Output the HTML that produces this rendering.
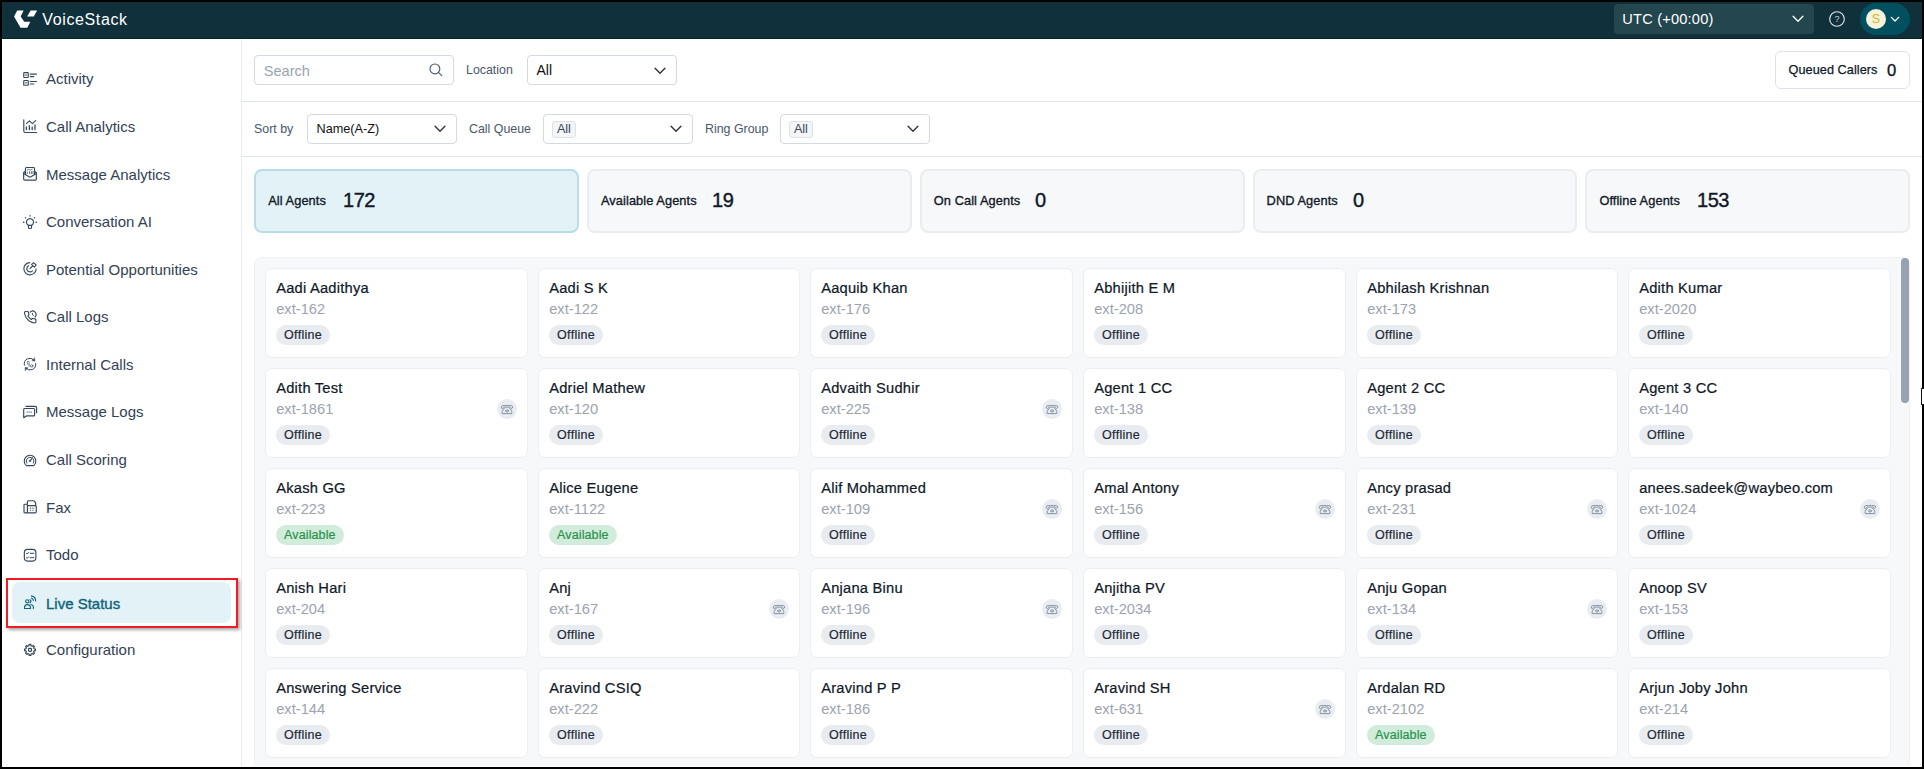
<!DOCTYPE html>
<html><head><meta charset="utf-8"><title>VoiceStack</title>
<style>
*{box-sizing:border-box;margin:0;padding:0}
html,body{width:1924px;height:769px;overflow:hidden;background:#000;font-family:"Liberation Sans",sans-serif}
#frame{position:absolute;left:2px;top:2px;width:1920px;height:765px;background:#fff;overflow:hidden}
#hdr{position:absolute;left:0;top:0;width:1920px;height:37px;background:#10303c;border-bottom:1px solid #06222c}
#hdr .logo{position:absolute;left:10px;top:8px}
#hdr .brand{position:absolute;left:40.3px;top:8px;font-size:16px;line-height:20px;color:#fff;letter-spacing:0.62px}
#hdr .tz{position:absolute;left:1612px;top:1.7px;width:200px;height:30px;border-radius:4px;background:#24464f;color:#fff;font-size:14.6px;line-height:30px;padding-left:8.3px;letter-spacing:.2px}
#hdr .tz .chev{position:absolute;right:10px;top:11.5px}
#hdr .help{position:absolute;left:1826px;top:8px}
#hdr .user{position:absolute;left:1858px;top:1px;width:50px;height:32px;border-radius:16px;background:#00505f}
#hdr .user .av{position:absolute;left:6px;top:6px;width:20px;height:20px;border-radius:50%;background:#f5f3dc;color:#d1b621;font-size:12.5px;line-height:20px;text-align:center}
#hdr .user .uchev{position:absolute;left:30px;top:13px}

#side{position:absolute;left:0;top:36.7px;width:240px;height:729px;border-right:1px solid #eaebee;background:#fff}
.nav{position:absolute;left:10px;width:219px;height:41.2px;border-radius:8px;color:#334155;font-size:15px;line-height:41.2px;margin-top:-36.7px}
.nav .ni{position:absolute;left:10px;top:12.6px}
.nav span{position:absolute;left:34px;top:0;white-space:nowrap}
.nav.act{background:#e3f2f7;color:#0f6377}
.nav.act span{top:1px;-webkit-text-stroke:.35px #0f6377}
.redbox{position:absolute;left:4.3px;top:539.7px;width:232px;height:49.5px;border:2px solid #ee1c25;box-shadow:2px 2px 3px rgba(0,0,0,.35)}

#main{position:absolute;left:240px;top:36.7px;width:1680px;height:729px}
.row1{position:absolute;left:0;top:0;width:1680px;height:63px;border-bottom:1px solid #dfe5ee}
.row2{position:absolute;left:0;top:63px;width:1680px;height:55.3px;border-bottom:1px solid #dfe5ee}
.inp{position:absolute;height:30px;border:1px solid #d3dae6;border-radius:4px;background:#fff}
.search{left:12.2px;top:16.4px;width:200px}
.search span{position:absolute;left:8.5px;top:1px;line-height:28.6px;font-size:14.6px;color:#9aa3b1}
.search .sic{position:absolute;left:173px;top:6px}
.sel{width:150px}
.sel .chev{position:absolute;right:10px;top:10.7px}
.sel .v{position:absolute;left:8.5px;top:1px;line-height:27.6px;font-size:14px;color:#111}
.sel .v.s{font-size:12.7px}
.sel .chip{position:absolute;left:7.6px;top:6.2px;height:17px;padding:0 4.3px;border:1px solid #dde2ea;border-radius:3px;background:#f3f5f9;font-size:12.6px;line-height:15.4px;color:#3b4656}
.lbl{position:absolute;font-size:12.4px;line-height:16px;color:#4b5666;white-space:nowrap}
.queued{position:absolute;left:1533px;top:12px;width:135px;height:38px;border:1px solid #dde2ee;border-radius:6px}
.queued .ql{position:absolute;left:12.6px;top:10.5px;font-size:12.7px;line-height:16px;color:#111827;white-space:nowrap;-webkit-text-stroke:.25px #111827;letter-spacing:.05px}
.queued .qn{position:absolute;left:111px;top:9px;font-size:16.6px;line-height:20px;color:#111827;-webkit-text-stroke:.35px #111827}
.stats{position:absolute;left:12.2px;top:130.2px;width:1656px;height:64px}
.stat{position:absolute;top:0;width:324.8px;height:64px;border:2px solid #e9ecf0;border-radius:8px;background:#f7f8fa}
.stat.on{background:#e3f2f7;border:2px solid #b9dde6}
.stat .sl{position:absolute;left:12.5px;top:23px;font-size:12.8px;line-height:16px;color:#111827;white-space:nowrap;-webkit-text-stroke:.33px #111827;letter-spacing:.08px}
.stat.on .sl{left:12px;top:22.5px}
.stat .sl{left:12px;top:22.5px}
.stat .sn{position:absolute;top:17.5px;font-size:20px;line-height:26px;color:#111827;white-space:nowrap;-webkit-text-stroke:.4px #111827;letter-spacing:-.45px}
.stat .sn{top:16.5px}
.panel{position:absolute;left:12.2px;top:218.6px;width:1655.6px;height:520px;background:#f7f8fa;border:1px solid #eef0f3;border-radius:8px 8px 0 0}
.card{position:absolute;height:90px;background:#fff;border:1px solid #eceef2;border-radius:7px}
.card .nm{position:absolute;left:10px;top:8.6px;font-size:14.7px;line-height:20px;color:#111827;white-space:nowrap;-webkit-text-stroke:.22px #111827;letter-spacing:.22px}
.card .ex{position:absolute;left:10px;top:29.5px;font-size:14.7px;line-height:20px;color:#9ca3af;white-space:nowrap}
.card .bd{position:absolute;left:10px;top:56px;height:20px;border-radius:10px;padding:0 7.9px;font-size:12.5px;line-height:21px;white-space:nowrap;letter-spacing:.3px;-webkit-text-stroke:.2px}
.bd.of{background:#e8ecf0;color:#1f2937}
.bd.av{background:#d1ecda;color:#27924d;letter-spacing:.12px}
.card .ph{position:absolute;right:10px;top:30px;width:20px;height:20px;border-radius:50%;background:#e9edf2}
.card .ph svg{position:absolute;left:3px;top:4.3px}
.thumb{position:absolute;left:1646px;top:0px;width:8px;height:145px;border-radius:4px;background:#96a3b0}
.cur{position:absolute;left:1921px;top:388px;width:4px;height:17px;background:#fff;border:1px solid #111;border-right:none;border-radius:1px 0 0 1px}

#frame::after{content:'';position:absolute;left:0;bottom:0;width:1920px;height:1px;background:#fff;z-index:5}

</style></head><body>
<div id="frame">
<div id="hdr"><svg class="logo" viewBox="0 0 26 20" width="26" height="20"><path fill="#fff" d="M5.2 0.4H11.6L8.7 6.5L12.2 11.8H18.3L15.3 17.8H8.5L2.05 6.5Z"/><path fill="#fff" d="M18.7 0.4H25.1L21.8 6.5H15.1Z"/></svg><span class="brand">VoiceStack</span><div class="tz"><span>UTC (+00:00)</span><svg class="chev" viewBox="0 0 12 8" width="12" height="8" fill="none" stroke="#fff" stroke-width="1.3" stroke-linecap="round" stroke-linejoin="round"><path d="M1.1 1.3L6 6.2L10.9 1.3"/></svg></div><svg class="help" viewBox="0 0 18 18" width="18" height="18" fill="none" stroke="#e5eaec" stroke-width="1.1"><circle cx="9" cy="9" r="7.3"/><text x="9" y="12.3" text-anchor="middle" font-family="Liberation Sans, sans-serif" font-size="9" fill="#c9d3d7" stroke="none">?</text></svg><div class="user"><span class="av">S</span><svg class="uchev" viewBox="0 0 10 7" width="10" height="7" fill="none" stroke="#fff" stroke-width="1.2" stroke-linecap="round" stroke-linejoin="round"><path d="M1.2 1.3L5 5L8.8 1.3"/></svg></div></div>
<div id="side">
<div class="nav" style="top:56.40px"><svg class="ni" viewBox="0 0 16 16" width="16" height="16" fill="none" stroke="#36475a" stroke-width="1.15" stroke-linecap="round" stroke-linejoin="round" ><rect x="1.75" y="1.65" width="4.5" height="4.8" rx="0.6"/><rect x="1.75" y="9.45" width="4.5" height="4.8" rx="0.6"/><path d="M3.3 4.05H4.7M3.3 11.85H4.7" stroke-width="0.9"/><path d="M8.3 3.1H14.5M8.3 5.6H11.8M8.3 10.5H14.5M8.3 13H11.8"/></svg><span>Activity</span></div>
<div class="nav" style="top:103.98px"><svg class="ni" viewBox="0 0 16 16" width="16" height="16" fill="none" stroke="#36475a" stroke-width="1.15" stroke-linecap="round" stroke-linejoin="round" ><path d="M1.8 0.9V12Q1.8 13.5 3.3 13.5H14.6"/><path d="M4.4 7.9V10.5M7.4 6.7V10.5M10.2 8.1V10.5M13 6V10.5" stroke-width="1.3"/><path d="M4.4 4.7L7.4 1.9L10.4 4.7L13.7 1.6" stroke-width="1.05"/></svg><span>Call Analytics</span></div>
<div class="nav" style="top:151.56px"><svg class="ni" viewBox="0 0 16 16" width="16" height="16" fill="none" stroke="#36475a" stroke-width="1.15" stroke-linecap="round" stroke-linejoin="round" ><path d="M1.65 6.7V13Q1.65 14.15 2.8 14.15H13.2Q14.35 14.15 14.35 13V6.7"/><path d="M1.65 7.5L7 10.8Q8 11.4 9 10.8L14.35 7.5"/><path d="M3.45 8.4V2.4Q3.45 1.45 4.4 1.45H11.6Q12.55 1.45 12.55 2.4V8.4"/><path d="M1.65 6.7L3.45 5.3M14.35 6.7L12.55 5.3"/><path d="M5.3 6.1V7.4M7.6 5.7V7.6M9.4 5.7V7.6M11 5.2V7.6" stroke-width="0.8"/><path d="M5.2 4.1L6.7 3.3L8.4 4.1L10.2 3.2" stroke-width="0.7"/></svg><span>Message Analytics</span></div>
<div class="nav" style="top:199.14px"><svg class="ni" viewBox="0 0 16 16" width="16" height="16" fill="none" stroke="#36475a" stroke-width="1.15" stroke-linecap="round" stroke-linejoin="round" ><path d="M6.45 11.3A3.55 3.55 0 1 1 9.55 11.3"/><path d="M6.45 11.3V13.5Q6.45 14.5 7.45 14.5H8.55Q9.55 14.5 9.55 13.5V11.3Z"/><path d="M8 1.7V2.1M1.5 8.25H1.9M14.1 8.25H14.5M3.5 3.75L3.55 3.8M12.5 3.75L12.45 3.8" stroke-width="1.3"/></svg><span>Conversation AI</span></div>
<div class="nav" style="top:246.72px"><svg class="ni" viewBox="0 0 16 16" width="16" height="16" fill="none" stroke="#36475a" stroke-width="1.15" stroke-linecap="round" stroke-linejoin="round" ><path d="M7.7 1.56A6.15 6.15 0 1 0 14.14 8.0"/><path d="M6.6 4.7A3.3 3.3 0 1 0 10.5 9.9"/><path d="M8.1 7.5L10.8 4.8"/><path d="M11.5 1.6L14.2 4L12.3 6.1L9.5 3.45Z" stroke-width="1.05"/></svg><span>Potential Opportunities</span></div>
<div class="nav" style="top:294.30px"><svg class="ni" viewBox="0 0 16 16" width="16" height="16" fill="none" stroke="#36475a" stroke-width="1.15" stroke-linecap="round" stroke-linejoin="round" ><path transform="translate(1.25 1.35) scale(0.575)" stroke-width="1.95" d="M22 16.92v3a2 2 0 0 1-2.18 2 19.79 19.79 0 0 1-8.63-3.07 19.5 19.5 0 0 1-6-6 19.79 19.79 0 0 1-3.07-8.67A2 2 0 0 1 4.11 2h3a2 2 0 0 1 2 1.72 12.84 12.84 0 0 0 .7 2.81 2 2 0 0 1-.45 2.11L8.09 9.91a16 16 0 0 0 6 6l1.27-1.27a2 2 0 0 1 2.11-.45 12.84 12.84 0 0 0 2.81.7A2 2 0 0 1 22 16.92z"/><path d="M8.1 3.2A3.5 3.5 0 1 1 13.2 8.0"/><path d="M10.4 4.3V5.8L11.5 6.6" stroke-width="1.0"/></svg><span>Call Logs</span></div>
<div class="nav" style="top:341.88px"><svg class="ni" viewBox="0 0 16 16" width="16" height="16" fill="none" stroke="#36475a" stroke-width="1.15" stroke-linecap="round" stroke-linejoin="round" ><g transform="translate(0 0.75)"><path d="M2.4 8.4A5.6 5.6 0 0 1 12.2 3.6" stroke-width="1.0"/><path d="M12.6 1.3L12.9 4.3L10.3 4.1Z" fill="#36475a" stroke-width="0.5"/><path d="M13.65 6.6A5.6 5.6 0 0 1 3.9 11.3" stroke-width="1.0"/><path d="M3.2 13.6L3.1 10.8L5.7 11.0Z" fill="#36475a" stroke-width="0.5"/><path transform="translate(4.6 4.1) scale(0.285)" stroke-width="2.5" d="M22 16.92v3a2 2 0 0 1-2.18 2 19.79 19.79 0 0 1-8.63-3.07 19.5 19.5 0 0 1-6-6 19.79 19.79 0 0 1-3.07-8.67A2 2 0 0 1 4.11 2h3a2 2 0 0 1 2 1.72 12.84 12.84 0 0 0 .7 2.81 2 2 0 0 1-.45 2.11L8.09 9.91a16 16 0 0 0 6 6l1.27-1.27a2 2 0 0 1 2.11-.45 12.84 12.84 0 0 0 2.81.7A2 2 0 0 1 22 16.92z"/></g></svg><span>Internal Calls</span></div>
<div class="nav" style="top:389.46px"><svg class="ni" viewBox="0 0 16 16" width="16" height="16" fill="none" stroke="#36475a" stroke-width="1.15" stroke-linecap="round" stroke-linejoin="round" ><path d="M2.6 4.45H11.6Q12.6 4.45 12.6 5.45V10.9Q12.6 11.9 11.6 11.9H4.4L1.7 13.7V5.45Q1.7 4.45 2.7 4.45Z"/><path d="M3.9 2.35H12.9Q14.6 2.35 14.6 4.05V8.7"/><path d="M5 8.1H5.4M7 8.1H7.4M9 8.1H9.4" stroke-width="1.0"/></svg><span>Message Logs</span></div>
<div class="nav" style="top:437.04px"><svg class="ni" viewBox="0 0 16 16" width="16" height="16" fill="none" stroke="#36475a" stroke-width="1.15" stroke-linecap="round" stroke-linejoin="round" ><path d="M4.4 13.6H11.7A5.8 5.8 0 1 0 4.4 13.6Z"/><path d="M4.8 11.1A3.85 3.85 0 0 1 9.3 5.45M11.2 6.9A3.85 3.85 0 0 1 11.4 11.1" stroke-width="0.95"/><path d="M8 8.9L10.5 5.8" stroke-width="1.1"/><circle cx="7.95" cy="8.95" r="0.75" fill="#36475a" stroke-width="0.5"/></svg><span>Call Scoring</span></div>
<div class="nav" style="top:484.62px"><svg class="ni" viewBox="0 0 16 16" width="16" height="16" fill="none" stroke="#36475a" stroke-width="1.15" stroke-linecap="round" stroke-linejoin="round" ><rect x="2.0" y="5.2" width="3.4" height="8.7" rx="0.9"/><path d="M5.4 6.55H13.2Q14.25 6.55 14.25 7.6V12.85Q14.25 13.9 13.2 13.9H5.4"/><path d="M5.4 5.2V2.7Q5.4 1.75 6.35 1.75H11.6L13.65 3.6V6.55"/><path d="M8.4 9.2H8.6M10.9 9.2H11.1M8.4 11.25H8.6M10.9 11.25H11.1" stroke-width="1.2"/></svg><span>Fax</span></div>
<div class="nav" style="top:532.20px"><svg class="ni" viewBox="0 0 16 16" width="16" height="16" fill="none" stroke="#36475a" stroke-width="1.15" stroke-linecap="round" stroke-linejoin="round" ><rect x="2.35" y="2.35" width="11.5" height="11.7" rx="3.2"/><path d="M4.4 6.3L5.2 7L6.6 5.5M8.2 6.3H11.8M4.4 10.7L5.2 11.4L6.6 9.9M8.2 10.7H11.8" stroke-width="1.0"/></svg><span>Todo</span></div>
<div class="nav act" style="top:579.78px"><svg class="ni" viewBox="0 0 16 16" width="16" height="16" fill="none" stroke="#0f6377" stroke-width="1.1" stroke-linecap="round" stroke-linejoin="round" ><g transform="translate(0 0.75)"><circle cx="5.25" cy="6.6" r="1.65"/><path d="M2.45 13.7V12.9A3 3 0 0 1 8.45 12.9V13.7Z"/><path d="M8.0 5.1A1.65 1.65 0 0 1 8.0 8.1"/><path d="M8.9 9.8A3.4 3.4 0 0 1 11.3 13.9"/><path d="M9.3 1.1A5.2 5.2 0 0 1 13.7 6.2"/><path d="M9.6 3.4A2.9 2.9 0 0 1 11.5 5.8"/></g></svg><span>Live Status</span></div>
<div class="nav" style="top:627.36px"><svg class="ni" viewBox="0 0 16 16" width="16" height="16" fill="none" stroke="#36475a" stroke-width="1.2" stroke-linecap="round" stroke-linejoin="round" ><path d="M6.98 3.82L7.14 2.47L8.86 2.47L9.02 3.82L10.16 4.30L11.23 3.45L12.45 4.67L11.60 5.74L12.08 6.88L13.43 7.04L13.43 8.76L12.08 8.92L11.60 10.06L12.45 11.13L11.23 12.35L10.16 11.50L9.02 11.98L8.86 13.33L7.14 13.33L6.98 11.98L5.84 11.50L4.77 12.35L3.55 11.13L4.40 10.06L3.92 8.92L2.57 8.76L2.57 7.04L3.92 6.88L4.40 5.74L3.55 4.67L4.77 3.45L5.84 4.30Z"/><rect x="6.55" y="6.45" width="2.9" height="2.9" rx="0.85"/></svg><span>Configuration</span></div>
<div class="redbox"></div>
</div>
<div id="main">
<div class="row1"><div class="inp search"><span>Search</span><svg class="sic" viewBox="0 0 16 16" width="16" height="16" fill="none" stroke="#4b5a6b" stroke-width="1.15" stroke-linecap="round"><circle cx="6.9" cy="6.9" r="4.9"/><path d="M10.6 10.7L13.8 13.7"/></svg></div><span class="lbl" style="left:224px;top:23px">Location</span><div class="inp sel" style="left:285px;top:16.4px"><span class="v">All</span><svg class="chev" viewBox="0 0 12 8" width="12" height="8" fill="none" stroke="#333" stroke-width="1.4" stroke-linecap="round" stroke-linejoin="round"><path d="M1.1 1.3L6 6.2L10.9 1.3"/></svg></div><div class="queued"><span class="ql">Queued Callers</span><span class="qn">0</span></div></div>
<div class="row2"><span class="lbl" style="left:12px;top:19.5px">Sort by</span><div class="inp sel" style="left:65px;top:12px"><span class="v s">Name(A-Z)</span><svg class="chev" viewBox="0 0 12 8" width="12" height="8" fill="none" stroke="#333" stroke-width="1.4" stroke-linecap="round" stroke-linejoin="round"><path d="M1.1 1.3L6 6.2L10.9 1.3"/></svg></div><span class="lbl" style="left:227px;top:19.5px">Call Queue</span><div class="inp sel" style="left:301px;top:12px"><span class="chip">All</span><svg class="chev" viewBox="0 0 12 8" width="12" height="8" fill="none" stroke="#333" stroke-width="1.4" stroke-linecap="round" stroke-linejoin="round"><path d="M1.1 1.3L6 6.2L10.9 1.3"/></svg></div><span class="lbl" style="left:463px;top:19.5px">Ring Group</span><div class="inp sel" style="left:538px;top:12px"><span class="chip">All</span><svg class="chev" viewBox="0 0 12 8" width="12" height="8" fill="none" stroke="#333" stroke-width="1.4" stroke-linecap="round" stroke-linejoin="round"><path d="M1.1 1.3L6 6.2L10.9 1.3"/></svg></div></div>
<div class="stats"><div class="stat on" style="left:0.00px"><span class="sl">All Agents</span><span class="sn" style="left:86.80px">172</span></div><div class="stat" style="left:332.80px"><span class="sl">Available Agents</span><span class="sn" style="left:123.00px">19</span></div><div class="stat" style="left:665.60px"><span class="sl">On Call Agents</span><span class="sn" style="left:113.20px">0</span></div><div class="stat" style="left:998.40px"><span class="sl">DND Agents</span><span class="sn" style="left:98.40px">0</span></div><div class="stat" style="left:1331.20px"><span class="sl">Offline Agents</span><span class="sn" style="left:109.60px">153</span></div></div>
<div class="panel">
<div class="card" style="left:10px;top:10px;width:263px"><div class="nm">Aadi Aadithya</div><div class="ex">ext-162</div><span class="bd of">Offline</span></div>
<div class="card" style="left:283px;top:10px;width:262px"><div class="nm">Aadi S K</div><div class="ex">ext-122</div><span class="bd of">Offline</span></div>
<div class="card" style="left:555px;top:10px;width:263px"><div class="nm">Aaquib Khan</div><div class="ex">ext-176</div><span class="bd of">Offline</span></div>
<div class="card" style="left:828px;top:10px;width:263px"><div class="nm">Abhijith E M</div><div class="ex">ext-208</div><span class="bd of">Offline</span></div>
<div class="card" style="left:1101px;top:10px;width:262px"><div class="nm">Abhilash Krishnan</div><div class="ex">ext-173</div><span class="bd of">Offline</span></div>
<div class="card" style="left:1373px;top:10px;width:263px"><div class="nm">Adith Kumar</div><div class="ex">ext-2020</div><span class="bd of">Offline</span></div>
<div class="card" style="left:10px;top:110px;width:263px"><div class="nm">Adith Test</div><div class="ex">ext-1861</div><span class="bd of">Offline</span><span class="ph"><svg viewBox="0 0 14 12" width="14" height="12" fill="none" stroke="#8593a3" stroke-width="1.0" stroke-linecap="round" stroke-linejoin="round"><path d="M1.2 3.5Q1.2 1.6 3 1.6H5.6Q7 0.9 8.4 1.6H11Q12.8 1.6 12.8 3.5L11.3 4.5L9.9 3.1H4.1L2.7 4.5Z"/><path d="M4.3 4.3L2.2 7.2V9.6H11.8V7.2L9.7 4.3"/><ellipse cx="7" cy="6.9" rx="1.5" ry="1.05"/></svg></span></div>
<div class="card" style="left:283px;top:110px;width:262px"><div class="nm">Adriel Mathew</div><div class="ex">ext-120</div><span class="bd of">Offline</span></div>
<div class="card" style="left:555px;top:110px;width:263px"><div class="nm">Advaith Sudhir</div><div class="ex">ext-225</div><span class="bd of">Offline</span><span class="ph"><svg viewBox="0 0 14 12" width="14" height="12" fill="none" stroke="#8593a3" stroke-width="1.0" stroke-linecap="round" stroke-linejoin="round"><path d="M1.2 3.5Q1.2 1.6 3 1.6H5.6Q7 0.9 8.4 1.6H11Q12.8 1.6 12.8 3.5L11.3 4.5L9.9 3.1H4.1L2.7 4.5Z"/><path d="M4.3 4.3L2.2 7.2V9.6H11.8V7.2L9.7 4.3"/><ellipse cx="7" cy="6.9" rx="1.5" ry="1.05"/></svg></span></div>
<div class="card" style="left:828px;top:110px;width:263px"><div class="nm">Agent 1 CC</div><div class="ex">ext-138</div><span class="bd of">Offline</span></div>
<div class="card" style="left:1101px;top:110px;width:262px"><div class="nm">Agent 2 CC</div><div class="ex">ext-139</div><span class="bd of">Offline</span></div>
<div class="card" style="left:1373px;top:110px;width:263px"><div class="nm">Agent 3 CC</div><div class="ex">ext-140</div><span class="bd of">Offline</span></div>
<div class="card" style="left:10px;top:210px;width:263px"><div class="nm">Akash GG</div><div class="ex">ext-223</div><span class="bd av">Available</span></div>
<div class="card" style="left:283px;top:210px;width:262px"><div class="nm">Alice Eugene</div><div class="ex">ext-1122</div><span class="bd av">Available</span></div>
<div class="card" style="left:555px;top:210px;width:263px"><div class="nm">Alif Mohammed</div><div class="ex">ext-109</div><span class="bd of">Offline</span><span class="ph"><svg viewBox="0 0 14 12" width="14" height="12" fill="none" stroke="#8593a3" stroke-width="1.0" stroke-linecap="round" stroke-linejoin="round"><path d="M1.2 3.5Q1.2 1.6 3 1.6H5.6Q7 0.9 8.4 1.6H11Q12.8 1.6 12.8 3.5L11.3 4.5L9.9 3.1H4.1L2.7 4.5Z"/><path d="M4.3 4.3L2.2 7.2V9.6H11.8V7.2L9.7 4.3"/><ellipse cx="7" cy="6.9" rx="1.5" ry="1.05"/></svg></span></div>
<div class="card" style="left:828px;top:210px;width:263px"><div class="nm">Amal Antony</div><div class="ex">ext-156</div><span class="bd of">Offline</span><span class="ph"><svg viewBox="0 0 14 12" width="14" height="12" fill="none" stroke="#8593a3" stroke-width="1.0" stroke-linecap="round" stroke-linejoin="round"><path d="M1.2 3.5Q1.2 1.6 3 1.6H5.6Q7 0.9 8.4 1.6H11Q12.8 1.6 12.8 3.5L11.3 4.5L9.9 3.1H4.1L2.7 4.5Z"/><path d="M4.3 4.3L2.2 7.2V9.6H11.8V7.2L9.7 4.3"/><ellipse cx="7" cy="6.9" rx="1.5" ry="1.05"/></svg></span></div>
<div class="card" style="left:1101px;top:210px;width:262px"><div class="nm">Ancy prasad</div><div class="ex">ext-231</div><span class="bd of">Offline</span><span class="ph"><svg viewBox="0 0 14 12" width="14" height="12" fill="none" stroke="#8593a3" stroke-width="1.0" stroke-linecap="round" stroke-linejoin="round"><path d="M1.2 3.5Q1.2 1.6 3 1.6H5.6Q7 0.9 8.4 1.6H11Q12.8 1.6 12.8 3.5L11.3 4.5L9.9 3.1H4.1L2.7 4.5Z"/><path d="M4.3 4.3L2.2 7.2V9.6H11.8V7.2L9.7 4.3"/><ellipse cx="7" cy="6.9" rx="1.5" ry="1.05"/></svg></span></div>
<div class="card" style="left:1373px;top:210px;width:263px"><div class="nm">anees.sadeek@waybeo.com</div><div class="ex">ext-1024</div><span class="bd of">Offline</span><span class="ph"><svg viewBox="0 0 14 12" width="14" height="12" fill="none" stroke="#8593a3" stroke-width="1.0" stroke-linecap="round" stroke-linejoin="round"><path d="M1.2 3.5Q1.2 1.6 3 1.6H5.6Q7 0.9 8.4 1.6H11Q12.8 1.6 12.8 3.5L11.3 4.5L9.9 3.1H4.1L2.7 4.5Z"/><path d="M4.3 4.3L2.2 7.2V9.6H11.8V7.2L9.7 4.3"/><ellipse cx="7" cy="6.9" rx="1.5" ry="1.05"/></svg></span></div>
<div class="card" style="left:10px;top:310px;width:263px"><div class="nm">Anish Hari</div><div class="ex">ext-204</div><span class="bd of">Offline</span></div>
<div class="card" style="left:283px;top:310px;width:262px"><div class="nm">Anj</div><div class="ex">ext-167</div><span class="bd of">Offline</span><span class="ph"><svg viewBox="0 0 14 12" width="14" height="12" fill="none" stroke="#8593a3" stroke-width="1.0" stroke-linecap="round" stroke-linejoin="round"><path d="M1.2 3.5Q1.2 1.6 3 1.6H5.6Q7 0.9 8.4 1.6H11Q12.8 1.6 12.8 3.5L11.3 4.5L9.9 3.1H4.1L2.7 4.5Z"/><path d="M4.3 4.3L2.2 7.2V9.6H11.8V7.2L9.7 4.3"/><ellipse cx="7" cy="6.9" rx="1.5" ry="1.05"/></svg></span></div>
<div class="card" style="left:555px;top:310px;width:263px"><div class="nm">Anjana Binu</div><div class="ex">ext-196</div><span class="bd of">Offline</span><span class="ph"><svg viewBox="0 0 14 12" width="14" height="12" fill="none" stroke="#8593a3" stroke-width="1.0" stroke-linecap="round" stroke-linejoin="round"><path d="M1.2 3.5Q1.2 1.6 3 1.6H5.6Q7 0.9 8.4 1.6H11Q12.8 1.6 12.8 3.5L11.3 4.5L9.9 3.1H4.1L2.7 4.5Z"/><path d="M4.3 4.3L2.2 7.2V9.6H11.8V7.2L9.7 4.3"/><ellipse cx="7" cy="6.9" rx="1.5" ry="1.05"/></svg></span></div>
<div class="card" style="left:828px;top:310px;width:263px"><div class="nm">Anjitha PV</div><div class="ex">ext-2034</div><span class="bd of">Offline</span></div>
<div class="card" style="left:1101px;top:310px;width:262px"><div class="nm">Anju Gopan</div><div class="ex">ext-134</div><span class="bd of">Offline</span><span class="ph"><svg viewBox="0 0 14 12" width="14" height="12" fill="none" stroke="#8593a3" stroke-width="1.0" stroke-linecap="round" stroke-linejoin="round"><path d="M1.2 3.5Q1.2 1.6 3 1.6H5.6Q7 0.9 8.4 1.6H11Q12.8 1.6 12.8 3.5L11.3 4.5L9.9 3.1H4.1L2.7 4.5Z"/><path d="M4.3 4.3L2.2 7.2V9.6H11.8V7.2L9.7 4.3"/><ellipse cx="7" cy="6.9" rx="1.5" ry="1.05"/></svg></span></div>
<div class="card" style="left:1373px;top:310px;width:263px"><div class="nm">Anoop SV</div><div class="ex">ext-153</div><span class="bd of">Offline</span></div>
<div class="card" style="left:10px;top:410px;width:263px"><div class="nm">Answering Service</div><div class="ex">ext-144</div><span class="bd of">Offline</span></div>
<div class="card" style="left:283px;top:410px;width:262px"><div class="nm">Aravind CSIQ</div><div class="ex">ext-222</div><span class="bd of">Offline</span></div>
<div class="card" style="left:555px;top:410px;width:263px"><div class="nm">Aravind P P</div><div class="ex">ext-186</div><span class="bd of">Offline</span></div>
<div class="card" style="left:828px;top:410px;width:263px"><div class="nm">Aravind SH</div><div class="ex">ext-631</div><span class="bd of">Offline</span><span class="ph"><svg viewBox="0 0 14 12" width="14" height="12" fill="none" stroke="#8593a3" stroke-width="1.0" stroke-linecap="round" stroke-linejoin="round"><path d="M1.2 3.5Q1.2 1.6 3 1.6H5.6Q7 0.9 8.4 1.6H11Q12.8 1.6 12.8 3.5L11.3 4.5L9.9 3.1H4.1L2.7 4.5Z"/><path d="M4.3 4.3L2.2 7.2V9.6H11.8V7.2L9.7 4.3"/><ellipse cx="7" cy="6.9" rx="1.5" ry="1.05"/></svg></span></div>
<div class="card" style="left:1101px;top:410px;width:262px"><div class="nm">Ardalan RD</div><div class="ex">ext-2102</div><span class="bd av">Available</span></div>
<div class="card" style="left:1373px;top:410px;width:263px"><div class="nm">Arjun Joby John</div><div class="ex">ext-214</div><span class="bd of">Offline</span></div>
<div class="thumb"></div></div>
</div>
</div>
<div class="cur"></div>
</body></html>
